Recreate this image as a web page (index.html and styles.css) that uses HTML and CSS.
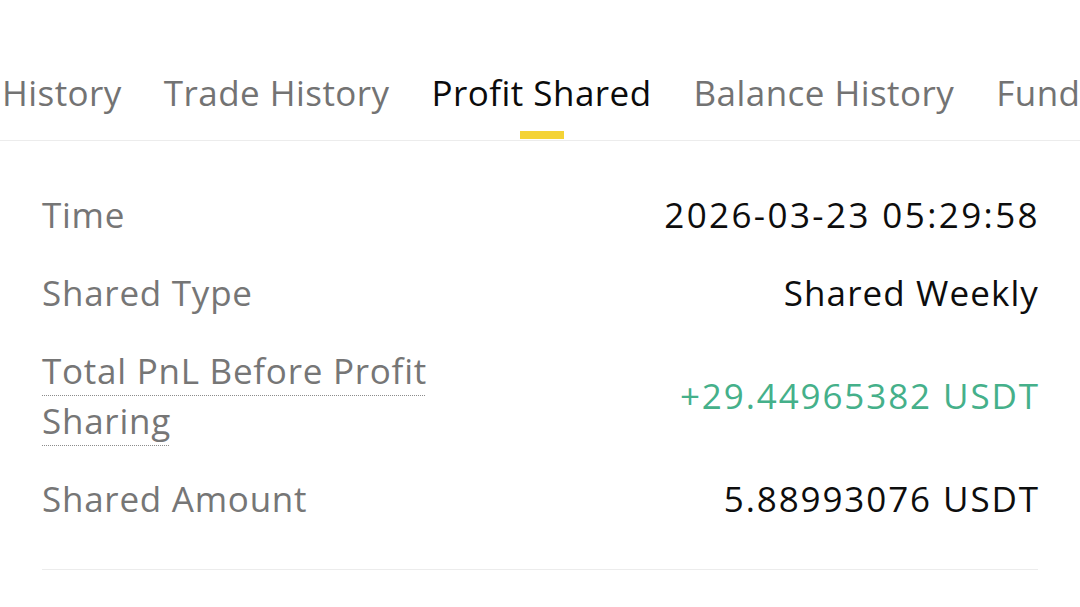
FILE: index.html
```html
<!DOCTYPE html>
<html>
<head>
<meta charset="utf-8">
<link rel="stylesheet" href="styles.css">
</head>
<body>
<div class="page">
  <nav class="tabs">
    <div class="tab">History</div>
    <div class="tab">Trade History</div>
    <div class="tab active">Profit Shared</div>
    <div class="tab">Balance History</div>
    <div class="tab">Funding</div>
  </nav>
  <section class="card">
    <div class="row">
      <div class="label">Time</div>
      <div class="value num date">2026-03-23 05:29:58</div>
    </div>
    <div class="row">
      <div class="label">Shared Type</div>
      <div class="value">Shared Weekly</div>
    </div>
    <div class="row">
      <div class="label"><span class="dotted">Total PnL Before Profit Sharing</span></div>
      <div class="value num green">+29.44965382 USDT</div>
    </div>
    <div class="row">
      <div class="label">Shared Amount</div>
      <div class="value num">5.88993076 USDT</div>
    </div>
  </section>
</div>
</body>
</html>
```
FILE: styles.css
```css
html, body {
  margin: 0;
  padding: 0;
  background: #fff;
}
body {
  font-family: "Open Sans", Lato, sans-serif;
  width: 1080px;
  height: 607px;
  overflow: hidden;
}
.page {
  display: flex;
  flex-direction: column;
}
.tabs {
  display: flex;
  gap: 42px;
  padding: 60px 0 0 2px;
  border-bottom: 1px solid #ececec;
  white-space: nowrap;
  overflow: hidden;
}
.tab {
  position: relative;
  font-size: 35px;
  letter-spacing: 0.45px;
  line-height: 66px;
  height: 80px;
  color: #737373;
  flex: none;
}
.tab.active {
  color: #0b0b0b;
}
.tab.active::after {
  content: "";
  position: absolute;
  left: 50%;
  bottom: 1px;
  width: 44px;
  height: 8px;
  margin-left: -22px;
  background: #f4d335;
}
.card {
  margin: 0 42px;
  padding: 49px 0 45px;
  border-bottom: 1px solid #ececec;
  display: flex;
  flex-direction: column;
  gap: 28px;
}
.row {
  display: flex;
  justify-content: space-between;
  align-items: center;
  font-size: 35px;
  line-height: 50px;
}
.label {
  color: #767676;
  width: 390px;
  letter-spacing: 0.75px;
}
.dotted {
  text-decoration: underline dotted #8c8c8c;
  text-decoration-thickness: 1px;
  text-underline-offset: 11px;
}
.value {
  color: #0d0d0d;
  text-align: right;
  letter-spacing: 1.1px;
  margin-right: -1px;
}
.value.num {
  letter-spacing: 1.9px;
  margin-right: -2px;
}
.value.date {
  letter-spacing: 2.4px;
}
.value.green {
  color: #45b08a;
}
```
